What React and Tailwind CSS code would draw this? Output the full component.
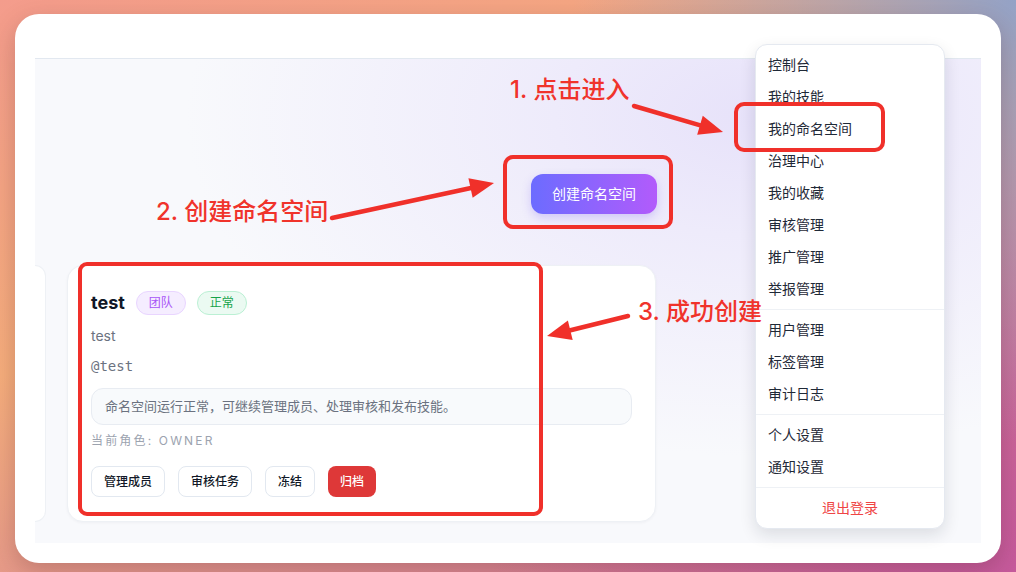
import React from 'react';

const cjk = "font-['Inter','Noto_Sans_CJK_SC',sans-serif]";

const menuGroups = [
  ['控制台', '我的技能', '我的命名空间', '治理中心', '我的收藏', '审核管理', '推广管理', '举报管理'],
  ['用户管理', '标签管理', '审计日志'],
  ['个人设置', '通知设置'],
];

const Arrow = ({ x1, y1, x2, y2 }) => {
  const a = Math.atan2(y2 - y1, x2 - x1);
  const len = 24;
  const half = 10;
  const bx = x2 - len * Math.cos(a);
  const by = y2 - len * Math.sin(a);
  const px = -Math.sin(a) * half;
  const py = Math.cos(a) * half;
  return (
    <g>
      <line x1={x1} y1={y1} x2={bx + 4 * Math.cos(a)} y2={by + 4 * Math.sin(a)} stroke="#f0302a" strokeWidth="4.5" strokeLinecap="round" />
      <polygon points={`${x2},${y2} ${bx + px},${by + py} ${bx - px},${by - py}`} fill="#f0302a" />
    </g>
  );
};

const Note = ({ className, children }) => (
  <div className={`absolute text-[24px] leading-8 font-medium text-[#f0332b] whitespace-nowrap ${className}`}>
    {children}
  </div>
);

const App = () => {
  return (
    <div className={`relative w-[1016px] h-[572px] overflow-hidden ${cjk} bg-[radial-gradient(circle_at_100%_0%,#94a2c6_0%,rgba(148,162,198,0)_38%),radial-gradient(circle_at_100%_100%,#c65a9c_0%,rgba(198,90,156,0)_45%),linear-gradient(160deg,#f49c8c_0%,#f6ae7c_40%,#e0928e_70%,#cc6c98_100%)]`}>
      {/* window */}
      <div className="absolute left-[15px] top-[14px] w-[986px] h-[549px] rounded-[24px] bg-white shadow-[0_8px_24px_rgba(80,30,40,0.25)] flex flex-col px-5 pt-[44px] pb-5">
        <div className="flex-1 border-t border-[#e2e8f0] bg-[radial-gradient(ellipse_60%_70%_at_76%_12%,#e7e2fa_0%,#eeebfb_35%,#f8f9fc_100%)] flex">
          <div className="w-[622px] flex flex-col">
            <div className="flex justify-end mt-[115px]">
              <button className="h-10 px-[21px] rounded-xl text-white text-sm bg-[linear-gradient(90deg,#6c6cff,#b25bfb)] shadow-[0_4px_10px_rgba(120,90,240,0.25)]">
                创建命名空间
              </button>
            </div>
            <div className="flex gap-[21px] mt-[51px]">
              <div className="w-[11px] h-[257px] bg-white rounded-r-2xl border border-l-0 border-[#eef1f5]" />
              <div className="w-[589px] h-[257px] bg-white rounded-2xl border border-[#eef1f5] shadow-[0_1px_3px_rgba(15,23,42,0.04)] px-[23px] pt-[25px]">
                <div className="flex items-center gap-[11px] h-6">
                  <span className="text-lg font-bold text-[#111827]">test</span>
                  <span className="h-6 px-3 rounded-full border border-[#e9d5ff] bg-[#f5edff] text-xs leading-[22px] text-[#a855f7]">团队</span>
                  <span className="h-6 px-3 rounded-full border border-[#bbf0d4] bg-[#ebfaf2] text-xs leading-[22px] text-[#16a34a]">正常</span>
                </div>
                <div className="mt-[11px] text-sm leading-5 text-[#6b7280]">test</div>
                <div className="mt-[10px] text-sm leading-5 text-[#6b7280] font-['DejaVu_Sans_Mono',monospace]">@test</div>
                <div className="mt-3 h-[37px] rounded-xl border border-[#e8ecf2] bg-[#f8fafc] px-[13px] flex items-center text-[13px] text-[#6b7280]">
                  命名空间运行正常，可继续管理成员、处理审核和发布技能。
                </div>
                <div className="mt-2 text-xs leading-4 tracking-[0.18em] text-[#9ca3af]">当前角色: OWNER</div>
                <div className="mt-[17px] flex gap-[13px]">
                  {['管理成员', '审核任务', '冻结'].map((t) => (
                    <button key={t} className="h-[31px] px-3 rounded-lg border border-[#e2e8f0] bg-white text-xs font-medium text-[#111827]">
                      {t}
                    </button>
                  ))}
                  <button className="h-[31px] px-3 rounded-lg bg-[#de3838] text-xs font-medium text-white">归档</button>
                </div>
              </div>
            </div>
          </div>
        </div>
      </div>

      {/* user dropdown */}
      <div className="absolute left-[755px] top-[44px] w-[190px] bg-white border border-[#e5e9f0] rounded-xl shadow-[0_6px_16px_rgba(15,23,42,0.12)] py-1">
        {menuGroups.map((g, gi) => (
          <div key={gi}>
            {g.map((item) => (
              <div key={item} className="h-8 px-[12px] flex items-center text-sm text-[#1f2937]">{item}</div>
            ))}
            <div className="my-1 h-px bg-[#eef1f5]" />
          </div>
        ))}
        <div className="h-8 flex items-center justify-center text-sm text-[#ef4444]">退出登录</div>
      </div>

      {/* annotations */}
      <div className="absolute left-[734px] top-[102px] w-[151px] h-[50px] border-4 border-[#f0302a] rounded-[10px]" />
      <div className="absolute left-[503px] top-[155px] w-[170px] h-[74px] border-4 border-[#f0302a] rounded-[10px]" />
      <div className="absolute left-[78px] top-[262px] w-[465px] h-[254px] border-4 border-[#f0302a] rounded-[9px]" />

      <Note className="left-[510px] top-[74px]">1. 点击进入</Note>
      <Note className="left-[156px] top-[196px]">2. 创建命名空间</Note>
      <Note className="left-[638px] top-[296px]">3. 成功创建</Note>

      <svg className="absolute inset-0 pointer-events-none" width="1016" height="572">
        <Arrow x1={634} y1={106} x2={723} y2={132} />
        <Arrow x1={332} y1={218} x2={494} y2={183} />
        <Arrow x1={628} y1={316} x2={547} y2={336} />
      </svg>
    </div>
  );
};

export default App;
